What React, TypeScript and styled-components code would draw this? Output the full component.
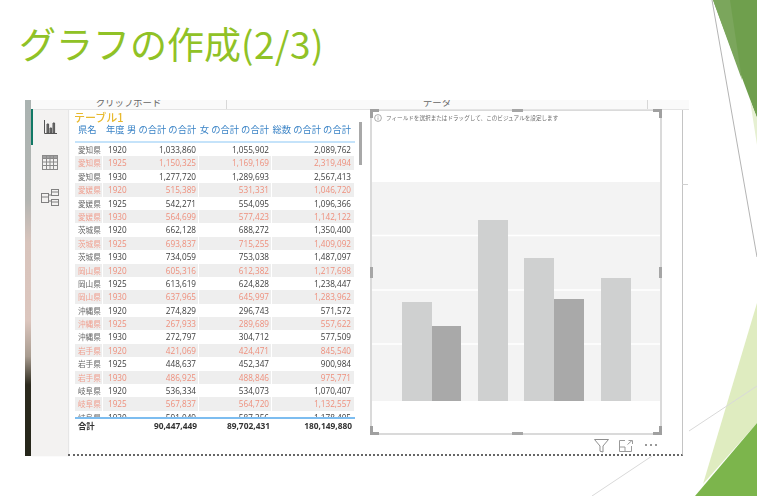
import React from 'react';
import styled, { createGlobalStyle } from 'styled-components';

const jp = '"Noto Sans CJK JP", "Noto Sans", sans-serif';
const num = '"Open Sans", "Noto Sans CJK JP", sans-serif';

const GlobalStyle = createGlobalStyle`
    html, body { margin: 0; padding: 0; background: #fff; }
    body { font-family: ${jp}; overflow: hidden; }
`;

const Slide = styled.div`
    position: relative;
    width: 757px;
    height: 496px;
    overflow: hidden;
    background: #fff;
`;

const Decor = styled.svg`
    position: absolute;
    left: 0;
    top: 0;
`;

const Title = styled.h1`
    position: relative;
    margin: 0;
    height: 100px;
    padding: 16px 0 0 19px;
    box-sizing: border-box;
    font-family: ${jp};
    font-weight: 400;
    font-size: 37px;
    line-height: 54px;
    color: #90c226;
`;

const TitleCount = styled.span`
    letter-spacing: 0.5px;
`;

const Shot = styled.div`
    position: relative;
    margin-left: 25px;
    width: 664px;
    height: 356px;
    display: flex;
    filter: blur(0.25px);
`;

const PhotoStrip = styled.div`
    width: 6px;
    flex: none;
    background: linear-gradient(180deg, #aab3b1 0%, #b3b5b2 28%, #d8c4bc 40%, #dcc6be 62%, #a89c90 72%, #2c2a1e 80%, #25261a 100%);
`;

const Window = styled.div`
    width: 658px;
    display: flex;
    flex-direction: column;
`;

const Ribbon = styled.div`
    height: 9px;
    flex: none;
    display: flex;
    overflow: hidden;
    background: #fafafa;
    border-bottom: 1px solid #e4e4e4;
    box-sizing: content-box;
`;

const RibbonGroup = styled.div<{ $width: number }>`
    width: ${p => p.$width}px;
    flex: none;
    box-sizing: border-box;
    border-right: 1px solid #d8d8d8;
    text-align: center;
    font-size: 9.4px;
    line-height: 5px;
    color: #666;
    white-space: nowrap;
`;

const Main = styled.div`
    flex: 1;
    display: flex;
    min-height: 0;
`;

const Sidebar = styled.nav`
    width: 37px;
    flex: none;
    background: #f3f2f1;
    display: flex;
    flex-direction: column;
    align-items: center;
    box-shadow: 1px 0 1px #e6e6e6;
`;

const NavItem = styled.div<{ $active?: boolean }>`
    width: 100%;
    height: 35.5px;
    box-sizing: border-box;
    display: flex;
    align-items: center;
    justify-content: center;
    padding-right: 1px;
    border-left: 2px solid ${p => (p.$active ? '#117865' : 'transparent')};
    &:first-child { margin-top: -1px; }
`;

const Canvas = styled.div`
    position: relative;
    flex: 1;
    display: flex;
    border-right: 1px solid #c4c4c4;
    border-bottom: 2px dotted #666;
    margin-right: 6px;
    min-width: 0;
`;

const RulerTick = styled.span`
    position: absolute;
    right: -6px;
    top: 74px;
    width: 6px;
    height: 1px;
    background: #d0d0d0;
`;

const TableVisual = styled.section`
    position: relative;
    width: 302px;
    flex: none;
    padding: 1px 0 0 6px;
    box-sizing: border-box;
`;

const TableTitle = styled.div`
    height: 11px;
    font-size: 11px;
    line-height: 12px;
    font-weight: 500;
    color: #e8b92f;
`;

const Row = styled.div`
    display: grid;
    grid-template-columns: 28px 24px 72px 73px 83px;
    width: 280px;
    margin-left: 1px;
`;

const HeaderRow = styled(Row)`
    height: 21px;
    padding-bottom: 5px;
    align-items: center;
    border-bottom: 2px solid #c5e3fa;
    box-sizing: border-box;
    font-size: 9.3px;
    color: #3a83c6;
    white-space: nowrap;
`;

const HeadCell = styled.div<{ $right?: boolean; $pad?: number }>`
    padding: ${p => (p.$right ? `0 ${p.$pad ?? 3}px 0 0` : '0 0 0 3px')};
    text-align: ${p => (p.$right ? 'right' : 'left')};
`;

const Rows = styled.div`
    height: 276px;
    overflow: hidden;
    border-bottom: 2px solid #7dbdf0;
    width: 280px;
    margin-left: 1px;
    box-sizing: border-box;
`;

const DataRow = styled(Row)<{ $alt: boolean }>`
    margin-left: 0;
    height: 13.4px;
    align-items: stretch;
    font-size: 8.2px;
    line-height: 13.4px;
    color: ${p => (p.$alt ? '#ee8f7c' : '#3c3c3c')};
    background: ${p => (p.$alt ? '#eeeeee' : '#fff')};
`;

const PrefCell = styled.div<{ $alt: boolean }>`
    padding-left: 3px;
    font-family: ${jp};
    font-size: 7.6px;
    color: ${p => (p.$alt ? '#f0a090' : '#666')};
    border-right: 1px solid #fff;
`;

const YearCell = styled.div`
    padding-left: 5px;
    font-family: ${num};
`;

const NumCell = styled.div<{ $pad?: number }>`
    padding-right: ${p => p.$pad ?? 2}px;
    text-align: right;
    font-family: ${num};
    border-right: 1px solid #fff;
`;

const TotalRow = styled(Row)`
    height: 13px;
    font-size: 8.4px;
    line-height: 13px;
    font-weight: 700;
    color: #333;
`;

const TotalLabel = styled.div`
    grid-column: 1 / span 2;
    padding-left: 3px;
`;

const TotalNum = styled(NumCell)`
    border: 0;
`;

const ScrollThumb = styled.div`
    position: absolute;
    left: 291px;
    top: 12px;
    width: 3px;
    height: 43px;
    background: #a8a8a8;
`;

const ChartColumn = styled.section`
    width: 292px;
    flex: none;
    display: flex;
    flex-direction: column;
`;

const ChartFrame = styled.div`
    position: relative;
    height: 325px;
    border: 1px solid #dadada;
    border-width: 1px 2px 2px 2px;
    box-sizing: border-box;
    background: #fff;
`;

const Hint = styled.div`
    height: 12px;
    display: flex;
    align-items: center;
    gap: 4px;
    padding: 1px 0 0 2px;
    font-size: 5.6px;
    line-height: 10px;
    color: #6e6e6e;
    white-space: nowrap;
`;

const Plot = styled.svg`
    display: block;
    margin-top: 58px;
`;

const Corner = styled.span<{ $v: 'top' | 'bottom'; $h: 'left' | 'right' }>`
    position: absolute;
    ${p => p.$v}: -2px;
    ${p => p.$h}: -2px;
    width: 9px;
    height: 9px;
    box-sizing: border-box;
    border-${p => p.$v}: 3px solid #a0a0a0;
    border-${p => p.$h}: 3px solid #a0a0a0;
`;

const Grip = styled.span<{ $side: 'top' | 'bottom' | 'left' | 'right' }>`
    position: absolute;
    background: #a6a6a6;
    ${p =>
        p.$side === 'top' || p.$side === 'bottom'
            ? `left: 140px; width: 11px; height: 3px; ${p.$side}: -2px;`
            : `top: 156px; width: 3px; height: 11px; ${p.$side}: -2px;`}
`;

const VisualBar = styled.div`
    flex: 1;
    display: flex;
    justify-content: flex-end;
    align-items: center;
    gap: 10px;
    padding: 3px 5px 0 0;
`;

const Dots = styled.div`
    display: flex;
    gap: 3px;
    margin-left: 2px;
    margin-top: -3px;
`;

const Dot = styled.i`
    width: 2px;
    height: 2px;
    border-radius: 50%;
    background: #777;
`;

type Rec = [string, number, string, string, string];

const rows: Rec[] = [
    ['愛知県', 1920, '1,033,860', '1,055,902', '2,089,762'],
    ['愛知県', 1925, '1,150,325', '1,169,169', '2,319,494'],
    ['愛知県', 1930, '1,277,720', '1,289,693', '2,567,413'],
    ['愛媛県', 1920, '515,389', '531,331', '1,046,720'],
    ['愛媛県', 1925, '542,271', '554,095', '1,096,366'],
    ['愛媛県', 1930, '564,699', '577,423', '1,142,122'],
    ['茨城県', 1920, '662,128', '688,272', '1,350,400'],
    ['茨城県', 1925, '693,837', '715,255', '1,409,092'],
    ['茨城県', 1930, '734,059', '753,038', '1,487,097'],
    ['岡山県', 1920, '605,316', '612,382', '1,217,698'],
    ['岡山県', 1925, '613,619', '624,828', '1,238,447'],
    ['岡山県', 1930, '637,965', '645,997', '1,283,962'],
    ['沖縄県', 1920, '274,829', '296,743', '571,572'],
    ['沖縄県', 1925, '267,933', '289,689', '557,622'],
    ['沖縄県', 1930, '272,797', '304,712', '577,509'],
    ['岩手県', 1920, '421,069', '424,471', '845,540'],
    ['岩手県', 1925, '448,637', '452,347', '900,984'],
    ['岩手県', 1930, '486,925', '488,846', '975,771'],
    ['岐阜県', 1920, '536,334', '534,073', '1,070,407'],
    ['岐阜県', 1925, '567,837', '564,720', '1,132,557'],
    ['岐阜県', 1930, '591,049', '587,356', '1,178,405'],
];

// x, top, width, colour: placed against the plot's own origin
const bars: [number, number, number, string][] = [
    [30, 120, 30, '#cfd0d0'],
    [60, 144, 29, '#a9a9a9'],
    [106, 38, 30, '#cfd0d0'],
    [152, 76, 30, '#cfd0d0'],
    [182, 117, 30, '#a9a9a9'],
    [229, 96, 30, '#cfd0d0'],
];

const BarsIcon = () => (
    <svg width="13" height="14" viewBox="0 0 13 14" fill="none" stroke="#555" strokeWidth="1">
        <path d="M.5 0v13.5H13" />
        <path d="M3 13V4h1.6v9zM6 13V8h1.600v5zM9 13V3h1.600v10z" fill="#777" />
    </svg>
);

const GridIcon = () => (
    <svg width="16" height="15" viewBox="0 0 16 15" fill="none" stroke="#8a8a8a" strokeWidth="1">
        <rect x=".5" y=".5" width="15" height="14" />
        <rect x=".5" y=".5" width="15" height="3" fill="#a0a0a0" />
        <path d="M4.500 1v13M8 1v13M11.500 1v13M1 7h14M1 10.500h14" />
    </svg>
);

const ModelIcon = () => (
    <svg width="18" height="17" viewBox="0 0 18 17" fill="none" stroke="#808080" strokeWidth="1">
        <rect x=".5" y="4.500" width="7" height="9" />
        <path d="M1 8h6" />
        <rect x="10.500" y=".5" width="7" height="6" />
        <path d="M11 3h6" />
        <rect x="10.500" y="10.500" width="7" height="6" />
        <path d="M11 13h6M7.500 6h3M7.500 12h3" />
    </svg>
);

const InfoIcon = () => (
    <svg width="8" height="8" viewBox="0 0 8 8" fill="none" stroke="#8a8a8a" strokeWidth=".7">
        <circle cx="4" cy="4" r="3.400" />
        <path d="M4 3.400v2.400M4 2v.7" />
    </svg>
);

const FilterIcon = () => (
    <svg width="15" height="14" viewBox="0 0 15 14" fill="none" stroke="#8f8f8f" strokeWidth="1">
        <path d="M.5.5h14L9 7v6l-3 -.8V7z" />
    </svg>
);

const FocusIcon = () => (
    <svg width="14" height="12" viewBox="0 0 14 12" fill="none" stroke="#9a9a9a" strokeWidth="1">
        <path d="M6 .5H.5v11h12V6M8.500 4.500l4.500-4M9.500.5H13.500V4M.5 7H6v4.500" />
    </svg>
);

const App: React.FC = () => {
    return (
        <Slide>
            <GlobalStyle />
            <Decor width="757" height="496" viewBox="0 0 757 496">
                <polygon points="713,0 757,0 757,118" fill="#6f9f4d" />
                <polygon points="713,0 730,0 742,80" fill="#7ba65c" />
                <polygon points="750,100 757,118 757,145" fill="#e6f0d2" />
                <polygon points="757,303 757,423 703,484" fill="#dfecc0" />
                <polygon points="757,423 757,496 695,496" fill="#7cb54c" />
                <path d="M712 0 L757 257" stroke="#b4b4b4" strokeWidth="1" fill="none" />
                <path d="M689 431 L757 386 M652 456 L592 496" stroke="#d9d9d9" strokeWidth="1" fill="none" />
            </Decor>
            <Title>グラフの作成<TitleCount>(2/3)</TitleCount></Title>
            <Shot>
                <PhotoStrip />
                <Window>
                    <Ribbon>
                        <RibbonGroup $width={196}>クリップボード</RibbonGroup>
                        <RibbonGroup $width={421}>データ</RibbonGroup>
                    </Ribbon>
                    <Main>
                        <Sidebar>
                            <NavItem $active><BarsIcon /></NavItem>
                            <NavItem><GridIcon /></NavItem>
                            <NavItem><ModelIcon /></NavItem>
                        </Sidebar>
                        <Canvas>
                            <TableVisual>
                                <TableTitle>テーブル1</TableTitle>
                                <HeaderRow>
                                    <HeadCell>県名</HeadCell>
                                    <HeadCell>年度</HeadCell>
                                    <HeadCell $right>男 の合計 の合計</HeadCell>
                                    <HeadCell $right>女 の合計 の合計</HeadCell>
                                    <HeadCell $right $pad={4}>総数 の合計 の合計</HeadCell>
                                </HeaderRow>
                                <Rows>
                                    {rows.map((r, i) => {
                                        const alt = i % 2 === 1;
                                        return (
                                            <DataRow key={i} $alt={alt}>
                                                <PrefCell $alt={alt}>{r[0]}</PrefCell>
                                                <YearCell>{r[1]}</YearCell>
                                                <NumCell>{r[2]}</NumCell>
                                                <NumCell>{r[3]}</NumCell>
                                                <NumCell $pad={3}>{r[4]}</NumCell>
                                            </DataRow>
                                        );
                                    })}
                                </Rows>
                                <TotalRow>
                                    <TotalLabel>合計</TotalLabel>
                                    <TotalNum>90,447,449</TotalNum>
                                    <TotalNum>89,702,431</TotalNum>
                                    <TotalNum $pad={3}>180,149,880</TotalNum>
                                </TotalRow>
                                <ScrollThumb />
                            </TableVisual>
                            <ChartColumn>
                                <ChartFrame>
                                    <Hint>
                                        <InfoIcon />
                                        フィールドを選択またはドラッグして、このビジュアルを設定します
                                    </Hint>
                                    <Plot width="288" height="219" viewBox="0 0 288 219">
                                        <rect width="288" height="219" fill="#f3f3f3" />
                                        <path d="M0 53.500H288M0 108H288M0 162H288" stroke="#fff" strokeWidth="1.500" />
                                        {bars.map(([x, y, w, fill], i) => (
                                            <rect key={i} x={x} y={y} width={w} height={219 - y} fill={fill} />
                                        ))}
                                    </Plot>
                                    <Corner $v="top" $h="left" />
                                    <Corner $v="top" $h="right" />
                                    <Corner $v="bottom" $h="left" />
                                    <Corner $v="bottom" $h="right" />
                                    <Grip $side="top" />
                                    <Grip $side="bottom" />
                                    <Grip $side="left" />
                                    <Grip $side="right" />
                                </ChartFrame>
                                <VisualBar>
                                    <FilterIcon />
                                    <FocusIcon />
                                    <Dots><Dot /><Dot /><Dot /></Dots>
                                </VisualBar>
                            </ChartColumn>
                            <RulerTick />
                        </Canvas>
                    </Main>
                </Window>
            </Shot>
        </Slide>
    );
};

export default App;
